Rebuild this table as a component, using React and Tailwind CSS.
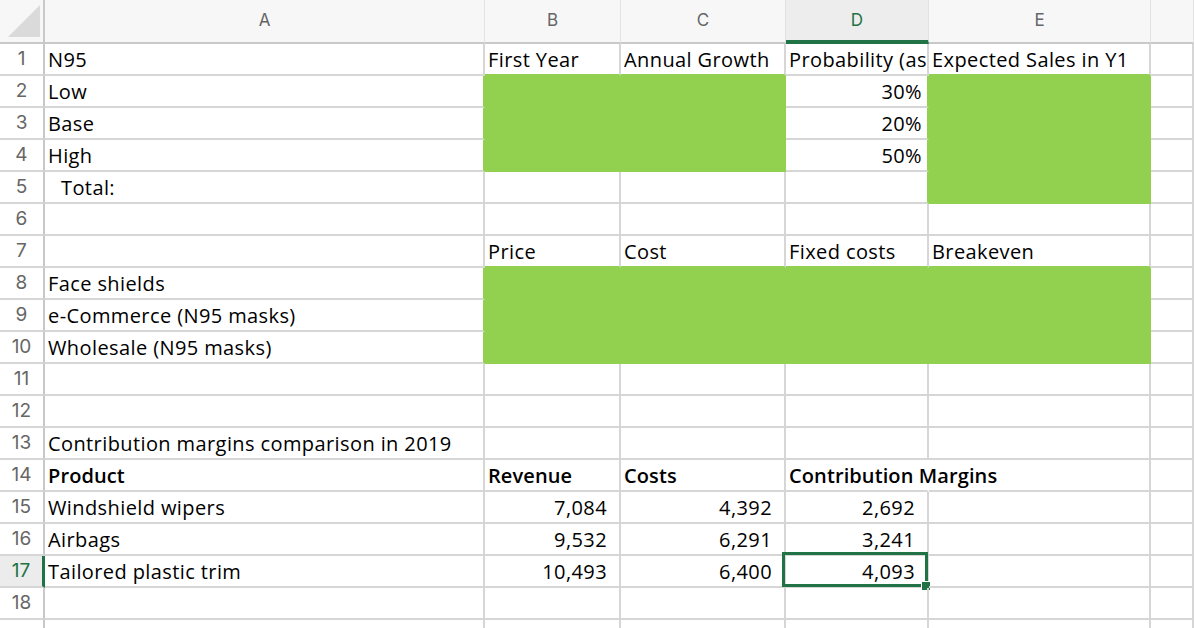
import React from "react";

const COLS = ["A", "B", "C", "D", "E", "F"];

const data = {
  1: { A: "N95", B: "First Year", C: "Annual Growth", D: "Probability (as a %)", E: "Expected Sales in Y1" },
  2: { A: "Low", D: "30%" },
  3: { A: "Base", D: "20%" },
  4: { A: "High", D: "50%" },
  5: { A: "Total:" },
  7: { B: "Price", C: "Cost", D: "Fixed costs", E: "Breakeven" },
  8: { A: "Face shields" },
  9: { A: "e-Commerce (N95 masks)" },
  10: { A: "Wholesale (N95 masks)" },
  13: { A: "Contribution margins comparison in 2019" },
  14: { A: "Product", B: "Revenue", C: "Costs", D: "Contribution Margins" },
  15: { A: "Windshield wipers", B: "7,084", C: "4,392", D: "2,692" },
  16: { A: "Airbags", B: "9,532", C: "6,291", D: "3,241" },
  17: { A: "Tailored plastic trim", B: "10,493", C: "6,400", D: "4,093" },
};

function isGreen(r, c) {
  const ci = COLS.indexOf(c);
  if (r >= 2 && r <= 4 && (c === "B" || c === "C")) return true;
  if (r >= 2 && r <= 5 && c === "E") return true;
  if (r >= 8 && r <= 10 && ci >= 1 && ci <= 4) return true;
  return false;
}

function Cell({ r, c }) {
  const ci = COLS.indexOf(c);
  const green = isGreen(r, c);
  const rightC = COLS[ci + 1];
  const rightGreen = green || (rightC && isGreen(r, rightC));
  const bottomGreen = green || isGreen(r + 1, c);
  const text = (data[r] || {})[c];
  const bold = r === 14;
  const isNum = r >= 15 && r <= 17 && c !== "A";
  const isPct = r >= 2 && r <= 4 && c === "D";
  const hideRight = r === 14 && c === "D";

  let cls = "relative flex items-center border-r-2 border-b-2 whitespace-nowrap text-[20px] text-black pt-[2px] ";
  cls += hideRight ? "border-r-white " : rightGreen ? "border-r-[#92d050] " : "border-r-[#d6d6d6] ";
  cls += bottomGreen ? "border-b-[#92d050] " : "border-b-[#d6d6d6] ";
  if (green) cls += "bg-[#92d050] ";
  if (bold) cls += "font-semibold tracking-[0.1px] ";
  else cls += "tracking-[0.4px] ";
  if (isNum) cls += "justify-end pr-[12px] ";
  else if (isPct) cls += "justify-end pr-[5px] ";
  else if (r === 5 && c === "A") cls += "pl-[16px] ";
  else cls += "pl-[3px] ";
  if (r === 1 && c === "D") cls += "overflow-hidden ";
  if (hideRight || (r === 13 && c === "A")) cls += "overflow-visible z-10 ";

  return (
    <div className={cls}>
      {text ? <span className="leading-[24px]">{text}</span> : null}
      {r === 17 && c === "D" ? (
        <>
          <div className="absolute left-[-4px] top-[-4px] right-[-1px] bottom-[-1px] border-[3px] border-[#217346] pointer-events-none" />
          <div className="absolute right-[-4px] bottom-[-5px] w-[10px] h-[10px] bg-[#217346] border border-white" />
        </>
      ) : null}
    </div>
  );
}

function RowHeader({ r }) {
  const sel = r === 17;
  return (
    <div
      className={
        "flex items-center justify-center border-b-2 border-b-[#d6d6d6] text-[19px] pt-[1px] " +
        (sel
          ? "bg-[#ececec] text-[#217346] border-r-[3px] border-r-[#217346]"
          : "bg-white text-[#666666] border-r-2 border-r-[#c9c9c9]")
      }
      style={{ fontFamily: "Inter, 'Liberation Sans', sans-serif" }}
    >
      {r <= 18 ? r : ""}
    </div>
  );
}

function ColHeader({ c }) {
  const sel = c === "D";
  return (
    <div
      className={
        "flex items-center justify-center border-r border-r-[#e2e2e2] text-[17px] " +
        (sel
          ? "bg-[#ededed] text-[#217346] border-b-[4px] border-b-[#217346] pt-[2px]"
          : "bg-[#f7f7f7] text-[#666666] border-b-2 border-b-[#c9c9c9]")
      }
      style={{ fontFamily: "Inter, 'Liberation Sans', sans-serif" }}
    >
      {c}
    </div>
  );
}

export default function App() {
  const rows = Array.from({ length: 19 }, (_, i) => i + 1);
  return (
    <div
      className="w-[1194px] h-[628px] overflow-hidden bg-white"
      style={{ fontFamily: "'Open Sans', 'Noto Sans', sans-serif" }}
    >
      <div className="grid grid-cols-[45px_440px_136px_165px_143px_222px_43px] grid-rows-[44px_repeat(19,32px)]">
        <div className="relative bg-[#f7f7f7] border-r-2 border-r-[#c9c9c9] border-b-2 border-b-[#c9c9c9]">
          <svg className="absolute left-0 top-0" width="43" height="42" viewBox="0 0 43 42">
            <polygon points="8,37 40,5 40,37" fill="#dadada" />
          </svg>
        </div>
        {COLS.map((c) => (
          <ColHeader key={c} c={c === "F" ? "" : c} />
        ))}
        {rows.map((r) => (
          <React.Fragment key={r}>
            <RowHeader r={r} />
            {COLS.map((c) => (
              <Cell key={c} r={r} c={c} />
            ))}
          </React.Fragment>
        ))}
      </div>
    </div>
  );
}
